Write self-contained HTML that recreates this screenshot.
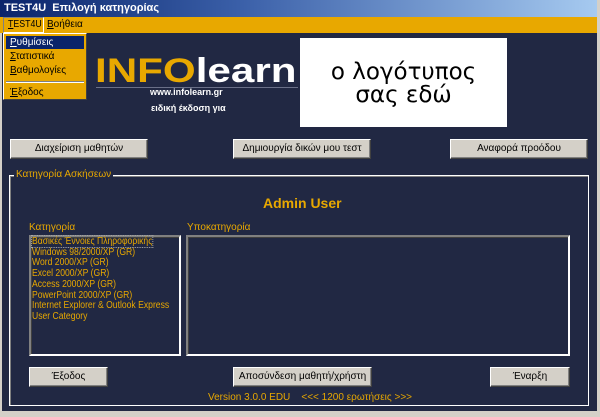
<!DOCTYPE html>
<html><head><meta charset="utf-8"><style>
*{margin:0;padding:0;box-sizing:border-box}
body{width:600px;height:417px;background:#d4d0c8;position:relative;overflow:hidden;font-family:"Liberation Sans","DejaVu Sans",sans-serif;font-size:11px}
.a{position:absolute}
.title{left:0;top:0;width:597px;height:17px;background:linear-gradient(90deg,#0a246a 0%,#3a5fa8 40%,#a6caf0 100%);color:#fff;font-weight:bold;font-size:11px;line-height:17px;padding-left:4px}
.menu{left:0;top:17px;width:597px;height:16px;background:#e8a800;line-height:16px;font-size:10px}
.body{left:0;top:33px;width:597px;height:378px;background:#212843;border-left:2px solid #d4d0c8}
.btn{background:#d4d0c8;border:1px solid;border-color:#fff #404040 #404040 #fff;box-shadow:inset -1px -1px #808080;text-align:center;font-size:10px;line-height:18px;color:#000}
.or{color:#e8a800}
.list{border:2px solid;border-color:#808080 #fff #fff #808080;background:#212843;box-shadow:inset 1px 1px #404040}
.dd{left:3px;top:33px;width:84px;height:67px;background:#e8a800;border:1px solid;border-color:#fff #404040 #404040 #fff;font-size:10px}
.dd div{position:absolute;left:2px;width:78px;height:13px;line-height:13px;padding-left:4px}
</style></head><body>
<div class="a title">TEST4U&nbsp; Επιλογή κατηγορίας</div>
<div class="a menu"><span style="position:absolute;left:3px;top:0;width:41px;height:16px;border:1px solid;border-color:#808080 #fff #fff #808080;line-height:14px"><span style="display:inline-block;margin-left:4px;transform:scaleX(0.88);transform-origin:left"><u>Τ</u>EST4U</span></span><span style="position:absolute;left:47px"><u>Β</u>οήθεια</span></div>
<div class="a body"></div>
<div class="a" style="left:95px;top:53px;font-weight:bold;font-size:34px;line-height:36px;transform:scaleX(1.24);transform-origin:left top;white-space:nowrap"><span style="color:#e8a800">INFO</span><span style="color:#fff">learn</span></div>
<div class="a" style="left:96px;top:87px;width:202px;height:1px;background:#6a7088"></div>
<div class="a" style="left:150px;top:86px;color:#fff;font-weight:bold;font-size:9px;line-height:12px">www.infolearn.gr</div>
<div class="a" style="left:151px;top:102px;color:#fff;font-weight:bold;font-size:9px;line-height:12px">ειδική έκδοση για</div>
<div class="a" style="left:300px;top:38px;width:207px;height:89px;background:#fff;color:#000;text-align:center;font-family:'DejaVu Sans',sans-serif;font-size:23px;line-height:23px;padding-top:23px">ο λογότυπος<br>σας εδώ</div>
<div class="a btn" style="left:10px;top:139px;width:138px;height:20px">Διαχείριση μαθητών</div>
<div class="a btn" style="left:233px;top:139px;width:138px;height:20px">Δημιουργία δικών μου τεστ</div>
<div class="a btn" style="left:450px;top:139px;width:138px;height:20px">Αναφορά προόδου</div>
<div class="a" style="left:9px;top:175px;width:580px;height:231px;border:1px solid #fff;box-shadow:inset 1px 1px #808080"></div>
<div class="a or" style="left:14px;top:169px;background:#212843;padding:0 2px;font-size:10px;line-height:12px">Κατηγορία Ασκήσεων</div>
<div class="a" style="left:263px;top:195px;color:#e8a800;font-weight:bold;font-size:14px">Admin User</div>
<div class="a or" style="left:29px;top:222px;font-size:10px">Κατηγορία</div>
<div class="a or" style="left:187px;top:222px;font-size:10px">Υποκατηγορία</div>
<div class="a list" style="left:29px;top:235px;width:152px;height:121px"></div>
<div class="a list" style="left:186px;top:235px;width:384px;height:121px"></div>
<div class="a or" style="left:32px;top:237px;font-size:10px;line-height:10.7px;transform:scaleX(0.86);transform-origin:left top;white-space:nowrap"><span style="outline:1px dotted #aaa">Βασικές Έννοιες Πληροφορικής</span><br>Windows 98/2000/XP (GR)<br>Word 2000/XP (GR)<br>Excel 2000/XP (GR)<br>Access 2000/XP (GR)<br>PowerPoint 2000/XP (GR)<br>Internet Explorer &amp; Outlook Express<br>User Category</div>
<div class="a btn" style="left:29px;top:367px;width:79px;height:20px">Έξοδος</div>
<div class="a btn" style="left:233px;top:367px;width:139px;height:20px">Αποσύνδεση μαθητή/χρήστη</div>
<div class="a btn" style="left:490px;top:367px;width:80px;height:20px">Έναρξη</div>
<div class="a or" style="left:208px;top:392px;font-size:10px;white-space:pre">Version 3.0.0 EDU    &lt;&lt;&lt; 1200 ερωτήσεις &gt;&gt;&gt;</div>
<div class="a dd">
<div style="top:2px;background:#0a246a;color:#fff"><u>Ρ</u>υθμίσεις</div>
<div style="top:16px"><u>Σ</u>τατιστικά</div>
<div style="top:30px"><u>Β</u>αθμολογίες</div>
<div style="top:47px;height:2px;padding:0;border-top:1px solid #808080;border-bottom:1px solid #fff"></div>
<div style="top:52px"><u>Έ</u>ξοδος</div>
</div>
</body></html>
